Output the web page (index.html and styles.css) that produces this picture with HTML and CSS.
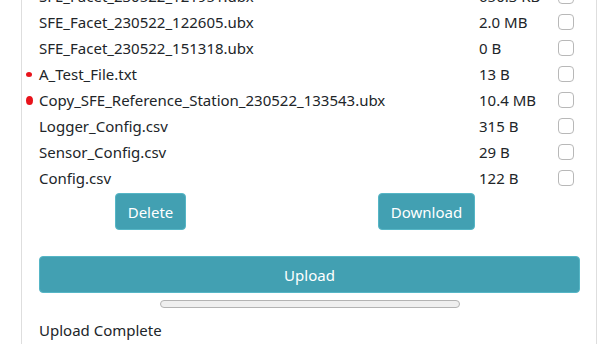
FILE: index.html
```html
<!DOCTYPE html>
<html lang="en">

<head>
  <meta charset="UTF-8">
  <meta name="viewport" content="width=device-width, initial-scale=1.0">
  <title>Files</title>
  <link rel="stylesheet" href="styles.css">
</head>

<body>
  <div id="panel">
    <div class="files">
      <div class="row"><span class="name">SFE_Facet_230522_121951.ubx</span><span class="size">650.3 KB</span><input type="checkbox"></div>
      <div class="row"><span class="name">SFE_Facet_230522_122605.ubx</span><span class="size">2.0 MB</span><input type="checkbox"></div>
      <div class="row"><span class="name">SFE_Facet_230522_151318.ubx</span><span class="size">0 B</span><input type="checkbox"></div>
      <div class="row"><span class="name"><i class="dot"></i>A_Test_File.txt</span><span class="size">13 B</span><input type="checkbox"></div>
      <div class="row"><span class="name"><i class="dot big"></i>Copy_SFE_Reference_Station_230522_133543.ubx</span><span class="size">10.4 MB</span><input type="checkbox"></div>
      <div class="row"><span class="name">Logger_Config.csv</span><span class="size">315 B</span><input type="checkbox"></div>
      <div class="row"><span class="name">Sensor_Config.csv</span><span class="size">29 B</span><input type="checkbox"></div>
      <div class="row"><span class="name">Config.csv</span><span class="size">122 B</span><input type="checkbox"></div>
    </div>
    <div class="actions">
      <button class="btn" id="delete">Delete</button>
      <button class="btn" id="download">Download</button>
    </div>
    <button class="btn wide" id="upload">Upload</button>
    <div class="progress"></div>
    <p class="status">Upload Complete</p>
  </div>
</body>

</html>
```

FILE: styles.css
```css
* {
  margin: 0;
  padding: 0;
  box-sizing: border-box;
}

body {
  font-family: "Noto Sans", "Open Sans", sans-serif;
  font-size: 15px;
  color: #212529;
  background: #fff;
}

#panel {
  width: 576px;
  height: 362px;
  margin: -17px 0 0 21px;
  padding: 0 16px 0 17px;
  border-left: 1px solid #dedede;
  border-right: 1px solid #dedede;
}

.row {
  display: grid;
  grid-template-columns: 440px 79px 16px;
  align-items: center;
  height: 26px;
  line-height: 24px;
}

.name {
  position: relative;
  white-space: nowrap;
}

.dot {
  position: absolute;
  left: -13px;
  top: 10px;
  width: 6px;
  height: 5px;
  border-radius: 50%;
  background: #e8131b;
}

.dot.big {
  top: 8px;
  width: 7px;
  height: 9px;
}

input[type="checkbox"] {
  appearance: none;
  width: 16px;
  height: 16px;
  border: 1px solid #b8b8b8;
  border-radius: 4px;
  background: #fff;
}

.actions {
  display: flex;
  gap: 192px;
  padding-left: 76px;
  margin-top: 2px;
}

.btn {
  height: 37px;
  padding: 0 10px;
  font: inherit;
  color: #fff;
  background: #42a0b2;
  border: 1px solid #56b6c6;
  border-radius: 4px;
}

#delete {
  width: 71px;
}

#download {
  width: 97px;
}

.wide {
  display: block;
  width: 541px;
  margin-top: 26px;
}

.progress {
  width: 300px;
  height: 8px;
  margin: 7px auto 0;
  background: #efefef;
  border: 1px solid #b3b3b3;
  border-radius: 4px;
}

.status {
  margin-top: 10px;
  line-height: 24px;
}
```
